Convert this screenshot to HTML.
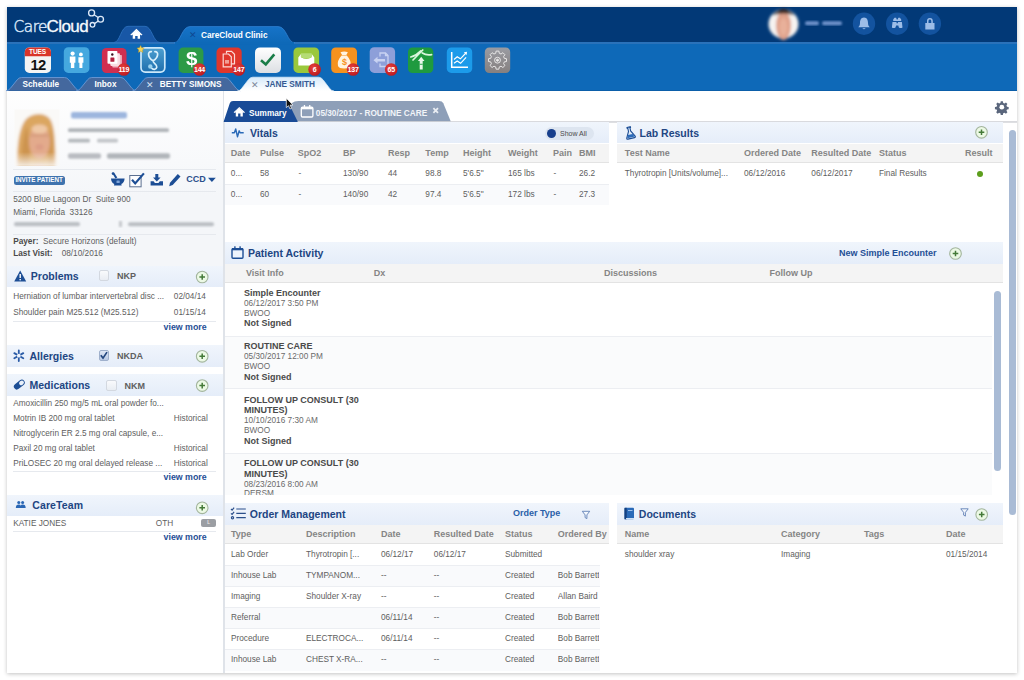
<!DOCTYPE html>
<html><head><meta charset="utf-8"><title>CareCloud</title>
<style>
*{box-sizing:border-box;margin:0;padding:0}
html,body{width:1024px;height:680px;overflow:hidden;background:#fff}
body{position:relative;font-family:"Liberation Sans",Arial,sans-serif;font-size:8.25px;color:#5e5e5e;line-height:1}
.a{position:absolute;white-space:pre}
.b{font-weight:700}
#app{position:absolute;left:7px;top:7px;width:1010px;height:666px;background:#fff;box-shadow:0 .5px 4px rgba(0,0,0,.24);overflow:hidden}
#top{position:absolute;left:7px;top:7px;width:1010px;height:35.5px;background:#023977}
#mid{position:absolute;left:7px;top:42px;width:1010px;height:48.7px;background:#0e69b8;border-top:2px solid #2a72ba;border-bottom:1px solid #0b5ea9}
.t{position:absolute;white-space:pre;line-height:12px;height:12px;margin-top:-6px}
.h{font-size:10.5px;font-weight:700;color:#214582}
.ch{font-size:9px;font-weight:700;color:#858585}
.hd{position:absolute;background:linear-gradient(#f0f5fc,#e5edf9);}
.cr{position:absolute;background:#f4f4f4;border-bottom:1px solid #e3e3e3}
.ln{position:absolute;height:1px;background:#e6e9ee}
.bd{color:#fff;font-size:7px;transform:translateX(-50%);letter-spacing:-.2px}
.pa{line-height:10.2px;color:#666}.pa b{font-size:9px;color:#4a4a4a}
.vm{font-size:8.8px;font-weight:700;color:#1f4f96}
</style></head><body>
<div id="app"></div>
<div id="top"></div>
<div id="mid"></div>
<!--HEADER-->
<svg class="a" style="left:0;top:0" width="1024" height="96" viewBox="0 0 1024 96">
<defs>
<linearGradient id="gw" x1="0" y1="0" x2="0" y2="1"><stop offset="0" stop-color="#fff"/><stop offset="1" stop-color="#dcdfe3"/></linearGradient>
<linearGradient id="gst" x1="0" y1="0" x2="0" y2="1"><stop offset="0" stop-color="#4d9fd0"/><stop offset="1" stop-color="#1f6fae"/></linearGradient>
<linearGradient id="ggr" x1="0" y1="0" x2="0" y2="1"><stop offset="0" stop-color="#9a9ca3"/><stop offset="1" stop-color="#86807f"/></linearGradient>
<linearGradient id="gjs" x1="0" y1="0" x2="0" y2="1"><stop offset="0" stop-color="#d6eafb"/><stop offset=".55" stop-color="#eef6fd"/><stop offset="1" stop-color="#ffffff"/></linearGradient>
<linearGradient id="gct" x1="0" y1="0" x2="0" y2="1"><stop offset="0" stop-color="#1673c8"/><stop offset="1" stop-color="#0e69b8"/></linearGradient><radialGradient id="gbd" cx=".4" cy=".35" r=".7"><stop offset="0" stop-color="#e8413a"/><stop offset="1" stop-color="#b81820"/></radialGradient>
<filter id="bl2"><feGaussianBlur stdDeviation="1.6"/></filter>
<filter id="bl1"><feGaussianBlur stdDeviation="1"/></filter>
</defs>
<!-- top tabs -->
<path d="M114 42.500 C120 42.500 121 26.300 128 26.300 L145 26.300 C152 26.300 153 42.500 160 42.500 Z" fill="#1857a6" stroke="#2f74c0" stroke-width=".8"/>
<path d="M174 42.800 C181 42.800 181.500 26.600 190 26.600 L278 26.600 C287 26.600 287 42.800 295 42.800 Z" fill="url(#gct)" stroke="#2f7fd0" stroke-width=".8"/>
<rect x="175" y="42" width="119" height="2.300" fill="#0e69b8"/>
<!-- home icon -->
<g transform="translate(136.400 34.600) scale(.82) translate(-136.500 -34)"><path d="M130.300 34.200 L136.500 28.400 L142.700 34.200 L141 34.200 L141 39.200 L138 39.200 L138 35.600 L135 35.600 L135 39.200 L132 39.200 L132 34.200 Z" fill="#fff"/>
<path d="M129.600 34.600 L136.500 28 L143.400 34.600" fill="none" stroke="#fff" stroke-width="1.500"/></g>
<!-- logo mark -->
<g fill="none" stroke="#dbe8f8" stroke-width="1.35">
<circle cx="91.6" cy="12.9" r="3"/><circle cx="100.6" cy="19.2" r="2.9"/><circle cx="92.5" cy="24.8" r="2.3"/>
<path d="M94.1 14.7 L98.2 17.5 M98.3 21 L94.5 23.6"/>
</g>
<!-- bottom tabs -->
<path d="M6.0 90.7 Q8.5 90.7 10.4 88.3 L17.1 79.9 Q19.0 77.5 21.5 77.5 L64.5 77.5 Q67.0 77.5 68.9 79.9 L75.6 88.3 Q77.5 90.7 80.0 90.7 Z" fill="#44689e"/><path d="M6.0 90.7 Q8.5 90.7 10.4 88.3 L17.1 79.9 Q19.0 77.5 21.5 77.5 L64.5 77.5 Q67.0 77.5 68.9 79.9 L75.6 88.3 Q77.5 90.7 80.0 90.7" fill="none" stroke="#6c99d4" stroke-width=".9"/>
<path d="M76.2 90.7 Q78.8 90.7 80.6 88.3 L87.4 79.9 Q89.2 77.5 91.8 77.5 L120.8 77.5 Q123.2 77.5 125.1 79.9 L131.9 88.3 Q133.8 90.7 136.2 90.7 Z" fill="#44689e"/><path d="M76.2 90.7 Q78.8 90.7 80.6 88.3 L87.4 79.9 Q89.2 77.5 91.8 77.5 L120.8 77.5 Q123.2 77.5 125.1 79.9 L131.9 88.3 Q133.8 90.7 136.2 90.7" fill="none" stroke="#6c99d4" stroke-width=".9"/>
<path d="M132.5 90.7 Q135.0 90.7 136.9 88.3 L143.6 79.9 Q145.5 77.5 148.0 77.5 L225.0 77.5 Q227.5 77.5 229.4 79.9 L236.1 88.3 Q238.0 90.7 240.5 90.7 Z" fill="#44689e"/><path d="M132.5 90.7 Q135.0 90.7 136.9 88.3 L143.6 79.9 Q145.5 77.5 148.0 77.5 L225.0 77.5 Q227.5 77.5 229.4 79.9 L236.1 88.3 Q238.0 90.7 240.5 90.7" fill="none" stroke="#6c99d4" stroke-width=".9"/>
<path d="M237.2 91 Q239.8 91 241.6 88.5 L248.4 79.7 Q250.2 77.2 252.8 77.2 L318.6 77.2 Q321.1 77.2 323.0 79.7 L329.7 88.5 Q331.6 91 334.1 91 Z" fill="url(#gjs)"/><path d="M237.2 91 Q239.8 91 241.6 88.5 L248.4 79.7 Q250.2 77.2 252.8 77.2 L318.6 77.2 Q321.1 77.2 323.0 79.7 L329.7 88.5 Q331.6 91 334.1 91" fill="none" stroke="#e4f1fc" stroke-width=".7"/>
<!-- ICONS -->
<!-- calendar -->
<rect x="24.8" y="47.5" width="26.2" height="25.4" rx="4.5" fill="#f4f4f4"/>
<path d="M24.8 56.2 L24.8 52 A4.5 4.5 0 0 1 29.300 47.5 L46.5 47.5 A4.5 4.5 0 0 1 51 52 L51 56.200 Z" fill="#d9352a"/>
<!-- people -->
<rect x="63.8" y="47.3" width="25.6" height="25.6" rx="4.5" fill="#45a8df"/>
<g fill="#fff"><circle cx="72.6" cy="53.6" r="2.1"/><path d="M69.800 56.600 h5.600 v6.200 h-1.100 v5.200 h-3.400 v-5.200 h-1.100z"/><circle cx="80.9" cy="54.400" r="1.900"/><path d="M78.400 57.200 h5 v5.600 h-1 v5.200 h-3 v-5.200 h-1z"/></g>
<!-- red docs -->
<rect x="101.900" y="48" width="24.600" height="25" rx="4.500" fill="#d02f50"/>
<g><rect x="112.300" y="55" width="9.600" height="12.600" rx=".8" fill="#f0b4c0"/><rect x="110.300" y="53.300" width="9.600" height="12.600" rx=".8" fill="#f8dde3"/><rect x="107.500" y="51" width="9.900" height="12.800" rx=".8" fill="#fff"/><circle cx="112.300" cy="54.500" r="1.200" fill="#3a1020"/><rect x="110.400" y="57.500" width="4" height="4.300" rx=".5" fill="#b21f3e"/></g>
<!-- stethoscope -->
<rect x="141" y="47.950" width="23.800" height="24.100" rx="4.200" fill="url(#gst)" stroke="#cbe8fa" stroke-width="1.700"/>
<path d="M151.300 51.600 C147.300 51.400 147.500 57.600 153.100 60.800 C158.700 57.600 158.900 51.400 154.900 51.600 M153.100 60.800 C153.100 63.800 157.200 64.200 156.800 67.200 C156.400 70 152.800 69.800 151.800 68.300" fill="none" stroke="#d9f0fc" stroke-width="1.700" stroke-linecap="round"/>
<circle cx="150.300" cy="66.500" r="2.200" fill="#9bd2ee"/>
<path d="M140.600 45.500 l1.100 2.300 2.500 .3 -1.800 1.800 .5 2.500 -2.300 -1.200 -2.200 1.200 .4 -2.500 -1.800 -1.800 2.500 -.3z" fill="#f6d55a" stroke="#b98f1d" stroke-width=".4"/>
<!-- dollar -->
<rect x="178.600" y="47.600" width="24.800" height="25.300" rx="4.500" fill="#2c9a47"/>
<!-- red copy -->
<rect x="216.500" y="47.600" width="25.200" height="25.300" rx="4.500" fill="#e0372c"/>
<g fill="none" stroke="#fbd9d5" stroke-width="1.200"><path d="M226.500 53.500 v-2.200 h5 l3 3 v9.500 h-3"/><path d="M223.200 54 h5.300 l2.800 2.800 v10 h-8.100z"/></g><rect x="225" y="60" width="4" height="3.600" fill="#f29d95"/>
<!-- check -->
<rect x="255" y="47.400" width="26" height="25.600" rx="5" fill="url(#gw)"/>
<path d="M261 60.200 L265.800 64.400 L274.300 54.300" fill="none" stroke="#1a7d48" stroke-width="2.600"/>
<!-- envelope -->
<rect x="293.500" y="47.500" width="25.600" height="25.400" rx="4.500" fill="#9ac83c"/>
<path d="M298.300 57.500 l2.600 -3.600 v3.400 q5.400 3.200 10.800 0 v-3.400 l2.600 3.600 v8 h-16z" fill="#fff"/>
<path d="M300.900 53.200 h10.800 v3.800 q-5.400 3.200 -10.800 0z" fill="#b5dc74"/>
<!-- money bag -->
<rect x="331.200" y="47.400" width="25.800" height="25.600" rx="4.500" fill="#f6921e"/>
<path d="M340.500 52.300 q3.700 -1.700 7.400 0 l-1.600 2.700 h-4.200z M341.600 55.500 h5.200 q5 5.500 3.600 10.500 q-1 2.500 -6.200 2.500 q-5.200 0 -6.200 -2.500 q-1.400 -5 3.600 -10.500z" fill="#fff3e0"/>
<!-- purple docs -->
<rect x="369.700" y="47.300" width="25.400" height="25.600" rx="4.500" fill="#8d9fd9"/>
<g fill="none" stroke="#c9d3f2" stroke-width="1.300"><path d="M380 56.500 v-3.500 h5.500 l2.500 2.500 v11 h-8 v-3"/><path d="M385.500 53 v2.500 h2.500"/></g><path d="M373.500 60.200 l4 -3.400 v2.100 h7.500 v2.600 h-7.500 v2.100z" fill="#c9d3f2"/>
<!-- green arrow -->
<rect x="408" y="47.400" width="25.300" height="25.600" rx="4.500" fill="#1f9a3f"/>
<g fill="#e8f7ea"><path d="M421.200 56.700 l3.300 4.300 h-1.800 v8.500 h-3 v-8.500 h-1.800z"/></g><g fill="none" stroke="#d9f5dd" stroke-width="1.700" stroke-linecap="round"><path d="M410.800 57 q5.500 -1.500 10 -6.200 M413 60 l9.800 -10 M422.300 53 q4 2.600 9.300 1.600"/></g>
<rect x="419.700" y="63.800" width="3" height=".9" fill="#1f9a3f"/>
<!-- chart -->
<rect x="446.800" y="47.400" width="25.400" height="25.500" rx="4.500" fill="#1c9bea"/>
<g fill="none" stroke="#fff" stroke-width="1.500"><path d="M451.700 52 v15.300 h16.300"/><path d="M454 59.500 l3.200 -2.700 3.200 2 5.500 -5.800" stroke-width="1.200"/><path d="M454 63.300 l3.200 -2.300 3.400 2.300 5.500 -6" stroke-width="1.200"/></g>
<path d="M463.800 52.300 l3.300 -.6 -.5 3.300z" fill="#fff"/>
<!-- gear -->
<rect x="484.800" y="47.400" width="25.400" height="25.600" rx="4.500" fill="url(#ggr)"/>
<g fill="none" stroke="#ecebeb" stroke-width="1.100" transform="translate(497.500 60.200) scale(.86) translate(-497.500 -60.200)"><circle cx="497.500" cy="60.200" r="3.400"/><circle cx="497.500" cy="60.200" r="1.200" fill="#ecebeb"/>
<path id="gearp" d="M495.900 51 h3.200 l.5 2.600 2 .8 2.200 -1.500 2.300 2.300 -1.500 2.200 .8 2 2.600 .5 v3.200 l-2.600 .5 -.8 2 1.500 2.200 -2.300 2.300 -2.200 -1.500 -2 .8 -.5 2.600 h-3.200 l-.5 -2.600 -2 -.8 -2.200 1.500 -2.300 -2.300 1.500 -2.200 -.8 -2 -2.600 -.5 v-3.200 l2.600 -.5 .8 -2 -1.500 -2.200 2.300 -2.300 2.200 1.500 2 -.8z" transform="translate(0,-1.400)"/></g>
<!-- badges -->
<g fill="url(#gbd)"><circle cx="123.800" cy="69.500" r="6.300"/><circle cx="199.500" cy="69.500" r="6.300"/><circle cx="238.800" cy="69.500" r="6.300"/><circle cx="314.600" cy="69.500" r="6.300"/><circle cx="353.100" cy="69.500" r="6.300"/><circle cx="391.200" cy="69.500" r="6.300"/></g>
<!-- top right -->
<g filter="url(#bl2)"><ellipse cx="783.500" cy="24" rx="15" ry="14.500" fill="#f6f3f1"/><ellipse cx="783.500" cy="25.500" rx="7.500" ry="14.500" fill="#dfa08a"/><ellipse cx="783.500" cy="27" rx="4" ry="9" fill="#e8b09a"/><path d="M772.500 15.500 q11 -13 22 0 q-11 -4 -22 0z" fill="#3a2620"/></g>
<g filter="url(#bl1)" fill="#6f93cb"><rect x="805" y="21.300" width="14" height="4" rx="2"/><rect x="822" y="21.300" width="20" height="4" rx="2"/></g>
<g fill="#13539f"><circle cx="864" cy="23.700" r="11.200"/><circle cx="897.200" cy="23.700" r="11.200"/><circle cx="929.900" cy="23.700" r="11.200"/></g>
<g fill="#9dbde8">
<path d="M864 17.500 c3.200 0 4 3 4 5.500 c0 2.500 1 3.300 1.700 4.200 h-11.400 c.7 -.9 1.700 -1.700 1.700 -4.200 c0 -2.500 .8 -5.500 4 -5.500z M862.300 28.200 h3.400 q-1.700 2 -3.400 0z"/>
<path d="M893.200 19.500 l1.300 -1.800 h1.600 l.6 1.800 h1 l.6 -1.800 h1.600 l1.300 1.800 v1.500 h-8z M892.500 22 h4 v1.200 h1.400 v-1.200 h4 l.6 5.500 q-1.800 1.200 -3.600 0 l-.6 -2 h-2.200 l-.6 2 q-1.800 1.200 -3.600 0z"/>
<path d="M925.300 23 h9.200 v6.500 h-9.200z M927 23 v-2 a2.900 2.900 0 0 1 5.800 0 v2 h-1.500 v-2 a1.400 1.400 0 0 0 -2.800 0 v2z"/>
</g>
</svg>
<div class="a" style="left:13.600px;top:17.200px;font-size:17px;line-height:20px;color:#e4eefb"><span style="font-family:'DejaVu Sans Light','DejaVu Sans',sans-serif;font-weight:200;font-size:15.300px;letter-spacing:-.5px;-webkit-text-stroke:.5px #d3e2f6;color:#d3e2f6">Care</span><span style="letter-spacing:-.55px;color:#f6f9fe;-webkit-text-stroke:.3px #f6f9fe;margin-left:-.5px">Cloud</span></div>
<div class="t b" style="left:201px;top:35.600px;color:#fff;font-size:8.250px">CareCloud Clinic</div>
<div class="t" style="left:188.800px;top:34.800px;color:#0f4890;font-size:8.500px">✕</div>
<div class="t b" style="left:22.500px;top:84.900px;color:#fff;font-size:8.250px">Schedule</div>
<div class="t b" style="left:94.500px;top:84.900px;color:#fff;font-size:8.250px">Inbox</div>
<div class="t" style="left:145.500px;top:85px;color:#d5e2f3;font-size:9px">✕</div>
<div class="t b" style="left:159.800px;top:84.900px;color:#fff;font-size:8.250px">BETTY SIMONS</div>
<div class="t" style="left:251.200px;top:85px;color:#7c8799;font-size:9px">✕</div>
<div class="t b" style="left:265px;top:84.900px;color:#365a93;font-size:8.250px">JANE SMITH</div>
<div class="t b" style="left:29px;top:52.300px;color:#fff;font-size:6.600px;letter-spacing:-.15px">TUES</div>
<div class="t b" style="left:30.600px;top:64.800px;color:#111;font-size:14.800px;letter-spacing:-.9px;line-height:14px;height:14px;margin-top:-7px">12</div>
<div class="t b" style="left:185.600px;top:59.300px;color:#fff;font-size:19px;transform:scaleX(1.08);transform-origin:0 0;line-height:20px;height:20px;margin-top:-10px">$</div>
<div class="t b" style="left:342px;top:62.300px;color:#f6921e;font-size:9px">$</div>
<div class="t b bd" style="left:123.800px;top:69.700px">119</div>
<div class="t b bd" style="left:199.500px;top:69.700px">144</div>
<div class="t b bd" style="left:238.800px;top:69.700px">147</div>
<div class="t b bd" style="left:314.600px;top:69.700px">6</div>
<div class="t b bd" style="left:353.100px;top:69.700px">137</div>
<div class="t b bd" style="left:391.200px;top:69.700px">65</div>
<!--/HEADER-->
<!--LEFT-->
<div class="a" style="left:7px;top:91px;width:216px;height:174.500px;background:linear-gradient(#fefefe 0,#f8f9fb 40%,#f4f6f9 60%,#f4f6f9 100%)"></div>
<div class="a" style="left:222.500px;top:91px;width:1px;height:582px;background:#dfe3e9"></div>
<svg class="a" style="left:7px;top:95px" width="216" height="100" viewBox="7 95 216 100">
<defs><filter id="pb"><feGaussianBlur stdDeviation="1.700"/></filter><filter id="pb2"><feGaussianBlur stdDeviation="1.300"/></filter>
<linearGradient id="pfade" x1="0" y1="0" x2="0" y2="1"><stop offset="0" stop-color="#faf9f7" stop-opacity="0"/><stop offset="1" stop-color="#faf9f7" stop-opacity=".85"/></linearGradient><clipPath id="pc"><rect x="14.500" y="109.500" width="45" height="56"/></clipPath></defs>
<g clip-path="url(#pc)"><g filter="url(#pb)">
<rect x="10" y="105" width="54" height="66" fill="#faf9f7"/>
<path d="M17 170 C17 150 18 132 24 122 C29 113 44 111 50 119 C56 128 55 150 56 170z" fill="#dba661"/>
<path d="M21 170 C21 150 23 135 27 126 L30 150 L29 170z" fill="#cd9450"/>
<path d="M52 170 C53 155 53 140 51 128 L48 150 L49 170z" fill="#cf9752"/>
<ellipse cx="39.500" cy="142" rx="10.500" ry="16.500" fill="#e3aa8c"/>
<ellipse cx="39.500" cy="129" rx="8" ry="4.500" fill="#efc8a5"/>
<ellipse cx="39.500" cy="147" rx="4" ry="3" fill="#dd9d86"/>
<rect x="30" y="134.500" width="19" height="2" fill="#c98f6e" opacity=".6"/>
<path d="M30 170 q9.500 -12 19 0z" fill="#dca07f"/>
</g><rect x="14" y="152" width="46" height="14" fill="url(#pfade)"/></g>

<g filter="url(#pb2)">
<rect x="71" y="112" width="56" height="6.500" rx="2" fill="#9db6de"/>
<rect x="68" y="128.300" width="101" height="3.800" rx="1.500" fill="#aeb2b7"/>
<rect x="68" y="138.800" width="22" height="3.800" rx="1.500" fill="#b4b8bc"/><rect x="97" y="138.800" width="21" height="3.800" rx="1.500" fill="#c1c4c8"/>
<rect x="68" y="153.300" width="33" height="5.400" rx="2" fill="#b9bcc1"/><rect x="107" y="153.300" width="63" height="5.400" rx="2" fill="#b1b5ba"/>
</g>
</svg>
<div class="ln" style="left:13px;top:168.500px;width:203px"></div>
<div class="a b" style="left:13.500px;top:175.800px;width:51.200px;height:8.800px;border-radius:2.500px;background:#3f73ae;color:#fff;font-size:6.300px;line-height:8.800px;text-align:center;letter-spacing:-.05px">INVITE PATIENT</div>
<svg class="a" style="left:108px;top:170px" width="112" height="20" viewBox="108 170 112 20">
<g fill="#1d4e95">
<path d="M111 178.500 h13.600 q-.3 4.200 -3.300 5.600 l.4 1.500 h-7.800 l.4 -1.500 q-3 -1.400 -3.300 -5.600z"/>
<path d="M112.300 173.300 l1.700 -.7 3.300 5 -1.900 .9z"/>
<circle cx="113" cy="173.600" r="1.300"/>
<path d="M150.600 181.300 h3 l1.300 1.600 h3.600 l1.300 -1.600 h3.200 v4.200 h-12.400z"/>
<path d="M155.300 174 h3 v3.500 h2.300 l-3.800 4 -3.800 -4 h2.300z"/>
<path d="M169.200 186.200 l.8 -3.500 7.800 -8.700 2.700 2.400 -7.800 8.700z"/>
<path d="M208 177.700 h7.800 l-3.900 4.300z"/>
</g>
<rect x="129.800" y="175.500" width="11.300" height="11.300" fill="#fdfdfe" stroke="#5b6f90" stroke-width="1"/>
<path d="M132 179.800 l3.200 3.600 l8.700 -10" fill="none" stroke="#1d4e95" stroke-width="2.200"/>
<rect x="116.500" y="180.500" width="3.200" height="2.600" rx=".5" fill="#7fa4d8"/>
</svg>
<div class="t b" style="left:186.200px;top:179px;color:#2a4f8b;font-size:9px">CCD</div>
<div class="ln" style="left:13px;top:191px;width:203px"></div>
<div class="t" style="left:13.200px;top:200.400px">5200 Blue Lagoon Dr&nbsp; Suite 900</div>
<div class="t" style="left:13.200px;top:212.700px">Miami, Florida&nbsp; 33126</div>
<svg class="a" style="left:7px;top:216px" width="216" height="16" viewBox="7 216 216 16"><g filter="url(#pb2)"><rect x="14" y="222" width="66" height="4.300" rx="2" fill="#bbbfc4"/><rect x="128" y="222.200" width="86" height="4" rx="2" fill="#b9bdc2"/><rect x="119" y="221" width="3" height="6" fill="#c5c8cc"/></g></svg>
<div class="ln" style="left:13px;top:233.600px;width:203px"></div>
<div class="t" style="left:13.200px;top:241.800px"><b style="color:#4a4a4a">Payer:</b>&nbsp; Secure Horizons (default)</div>
<div class="t" style="left:13.200px;top:253.700px"><b style="color:#4a4a4a">Last Visit:</b>&nbsp; &nbsp; 08/10/2016</div>

<div class="hd" style="left:7px;top:265.500px;width:216px;height:21.500px"></div>
<div class="t h" style="left:30.800px;top:276.000px">Problems</div>
<div class="a" style="left:98.500px;top:270.300px;width:10.500px;height:10.500px;border:1px solid #d3d8e0;border-radius:2px;background:linear-gradient(#f9fafc,#e9edf3)"></div>
<div class="t b" style="left:117px;top:276.400px;color:#5f5f5f;font-size:9px">NKP</div>
<div class="t" style="left:13.200px;top:297.300px">Herniation of lumbar intervertebral disc ...</div><div class="t" style="left:173.800px;top:297.300px">02/04/14</div>
<div class="t" style="left:13.200px;top:312.500px">Shoulder pain M25.512 (M25.512)</div><div class="t" style="left:173.800px;top:312.500px">01/15/14</div>
<div class="ln" style="left:13px;top:321.300px;width:203px"></div>
<div class="t vm" style="left:163.600px;top:327.200px">view more</div>

<div class="hd" style="left:7px;top:345px;width:216px;height:21.500px"></div>
<div class="t h" style="left:29.500px;top:355.500px">Allergies</div>
<div class="a" style="left:98.500px;top:350.300px;width:10.500px;height:10.500px;border:1px solid #9fb0cc;border-radius:2px;background:linear-gradient(#dfe7f5,#b9c9e4)"></div>
<div class="t b" style="left:117px;top:356.400px;color:#5f5f5f;font-size:9px">NKDA</div>

<div class="hd" style="left:7px;top:374px;width:216px;height:21.500px"></div>
<div class="t h" style="left:29.500px;top:384.800px">Medications</div>
<div class="a" style="left:106px;top:380.300px;width:10.500px;height:10.500px;border:1px solid #d3d8e0;border-radius:2px;background:linear-gradient(#f9fafc,#e9edf3)"></div>
<div class="t b" style="left:124.500px;top:385.700px;color:#5f5f5f;font-size:9px">NKM</div>
<div class="t" style="left:13.200px;top:403.500px">Amoxicillin 250 mg/5 mL oral powder fo...</div>
<div class="t" style="left:13.200px;top:418.600px">Motrin IB 200 mg oral tablet</div><div class="t" style="left:173.800px;top:418.600px">Historical</div>
<div class="t" style="left:13.200px;top:433.600px">Nitroglycerin ER 2.5 mg oral capsule, e...</div>
<div class="t" style="left:13.200px;top:448.600px">Paxil 20 mg oral tablet</div><div class="t" style="left:173.800px;top:448.600px">Historical</div>
<div class="t" style="left:13.200px;top:463.600px">PriLOSEC 20 mg oral delayed release ...</div><div class="t" style="left:173.800px;top:463.600px">Historical</div>
<div class="ln" style="left:13px;top:471px;width:203px"></div>
<div class="t vm" style="left:163.600px;top:476.700px">view more</div>

<div class="hd" style="left:7px;top:494.500px;width:216px;height:21.500px"></div>
<div class="t h" style="left:32.300px;top:504.700px;letter-spacing:.1px">CareTeam</div>
<div class="t" style="left:13.200px;top:523.600px">KATIE JONES</div><div class="t" style="left:155.800px;top:523.600px">OTH</div>
<div class="a b" style="left:201.300px;top:519.300px;width:14.500px;height:8px;border-radius:2px;background:#9b9ea3;color:#e8e8e8;font-size:4.500px;line-height:8px;text-align:center">L</div>
<div class="ln" style="left:13px;top:531.300px;width:203px"></div>
<div class="t vm" style="left:163.600px;top:536.700px">view more</div>

<svg class="a" style="left:7px;top:262px" width="216" height="260" viewBox="7 262 216 260">
<g fill="none" stroke="#a3b59d" stroke-width="1.100"><circle cx="202.200" cy="277" r="5.800" fill="#ecf9e5"/><circle cx="202.200" cy="356.300" r="5.800" fill="#ecf9e5"/><circle cx="202.200" cy="385.600" r="5.800" fill="#ecf9e5"/><circle cx="202.200" cy="507.800" r="5.800" fill="#ecf9e5"/></g>
<g stroke="#447a38" stroke-width="1.500"><path d="M199.4 277 h5.600 M202.200 274.2 v5.600 M199.4 356.300 h5.600 M202.200 353.5 v5.600 M199.4 385.600 h5.600 M202.200 382.8 v5.600 M199.4 507.800 h5.600 M202.200 505.0 v5.600"/></g>
<!-- warning -->
<path d="M20.200 270.500 l6 11 h-12z" fill="#1d4e95"/><rect x="19.500" y="274" width="1.400" height="4" fill="#fff"/><rect x="19.500" y="279" width="1.400" height="1.300" fill="#fff"/>
<!-- asterisk -->
<g stroke="#2a5ba6" stroke-width="1.800" stroke-linecap="round"><path d="M18.800 350.500 v10.500 M14.300 353.100 l9 5.200 M14.300 358.300 l9 -5.200"/></g><circle cx="18.800" cy="355.700" r="1.900" fill="#eef3fb"/>
<!-- pill -->
<g transform="rotate(-38 19.300 384.600)"><rect x="13.200" y="381.600" width="12.200" height="6" rx="3" fill="#1d4e95"/><rect x="19.600" y="382.500" width="5" height="4.200" rx="2.100" fill="#e9f0fa"/></g>
<!-- team -->
<g fill="#2a67b5" transform="translate(20.500 505) scale(.85) translate(-21.500 -505)"><circle cx="19.500" cy="502" r="1.800"/><circle cx="24" cy="502" r="1.800"/><path d="M16 508.500 q0 -4 3.500 -4 q2.200 0 2.300 1.500 q.1 -1.500 2.300 -1.500 q3.500 0 3.500 4z"/></g>
<!-- nkda check -->
<path d="M100.800 355.300 l2.200 2.800 l4 -6" fill="none" stroke="#24477f" stroke-width="1.700"/>
</svg>
<!--/LEFT-->
<!--MAIN-->
<svg class="a" style="left:220px;top:96px" width="800" height="30" viewBox="220 96 800 30">
<path d="M288 121.500 L288 110 Q290 101 298.500 101 L439 101 Q442.300 101 443.300 103.300 L450.800 121.500 Z" fill="#8e9fb8"/>
<path d="M223.600 121.800 L229.800 103.300 Q230.600 101 233 101 L285.500 101 Q287.800 101 288.700 103.200 L297.800 121.800 Z" fill="#194b97"/>
<rect x="224" y="121.300" width="793" height="1.300" fill="#c9cbd0"/>
<rect x="224" y="120.800" width="73.500" height="1.400" fill="#194b97"/>
<g transform="translate(239.300 112.200) scale(.88) translate(-239.300 -112)"><path d="M233.800 112.300 L239.300 107.100 L244.800 112.300 L243.300 112.300 L243.300 116.900 L240.600 116.900 L240.600 113.600 L238 113.600 L238 116.900 L235.300 116.900 L235.300 112.300 Z" fill="#fff"/>
<path d="M233.300 112.600 L239.300 106.900 L245.300 112.600" fill="none" stroke="#fff" stroke-width="1.200"/></g>
<rect x="301.300" y="107.200" width="11.600" height="9.800" rx="1.300" fill="none" stroke="#fff" stroke-width="1.300"/><rect x="301.300" y="107" width="11.600" height="2.300" fill="#fff"/><rect x="303.800" y="105" width="1.300" height="3" fill="#fff"/><rect x="309.100" y="105" width="1.300" height="3" fill="#fff"/>
<path d="M433.400 108.200 l4.600 4.600 M438 108.200 l-4.600 4.600" stroke="#e9edf3" stroke-width="1.800"/>
<!-- gear -->
<g transform="translate(1001.800 107.200) scale(.88)"><path d="M-1.200 -6.800 h2.400 l.4 1.900 1.500 .6 1.600 -1.100 1.700 1.700 -1.100 1.600 .6 1.500 1.900 .4 v2.400 l-1.900 .4 -.6 1.500 1.100 1.600 -1.700 1.700 -1.600 -1.100 -1.500 .6 -.4 1.900 h-2.400 l-.4 -1.900 -1.500 -.6 -1.600 1.100 -1.700 -1.700 1.100 -1.600 -.6 -1.500 -1.900 -.4 v-2.400 l1.900 -.4 .6 -1.500 -1.100 -1.600 1.700 -1.700 1.600 1.100 1.500 -.6z" fill="#5a667c"/><circle r="2.700" fill="#fff"/></g>
<!-- cursor -->
<path d="M286.300 98.200 L286.300 107.600 L288.500 105.700 L290 109 L291.600 108.300 L290.100 105.100 L293 105 Z" fill="#111" stroke="#fff" stroke-width=".7"/>
</svg>
<div class="t b" style="left:249px;top:113.600px;color:#fff">Summary</div>
<div class="t b" style="left:315.800px;top:113.600px;color:#f1f4f8">05/30/2017 - ROUTINE CARE</div>
<div class="a" style="left:223.500px;top:122px;width:1px;height:551px;background:#dfe3e9"></div>

<!-- Vitals -->
<div class="hd" style="left:224.500px;top:122.200px;width:384.500px;height:21.300px"></div>
<div class="t h" style="left:250px;top:133.200px">Vitals</div>
<svg class="a" style="left:230px;top:126px" width="16" height="14" viewBox="230 126 16 14"><path d="M231.800 132.800 h2.600 l1.300 -3.800 1.800 7.800 1.700 -6 .9 2 h3.600" fill="none" stroke="#2a6ab8" stroke-width="1.400" stroke-linejoin="round"/></svg>
<div class="a" style="left:545px;top:127px;width:49px;height:13.400px;border-radius:7px;background:#dde5f0"></div>
<div class="a" style="left:546.800px;top:129.200px;width:9px;height:9px;border-radius:5px;background:#183f8c"></div>
<div class="t" style="left:560px;top:133.800px;font-size:7px;color:#4b4b4b">Show All</div>
<div class="cr" style="left:224.500px;top:143.500px;width:384.500px;height:19px"></div>
<div class="t ch" style="left:230.800px;top:153.400px">Date</div><div class="t ch" style="left:260px;top:153.400px">Pulse</div><div class="t ch" style="left:297.800px;top:153.400px">SpO2</div><div class="t ch" style="left:343px;top:153.400px">BP</div><div class="t ch" style="left:388px;top:153.400px">Resp</div><div class="t ch" style="left:425.300px;top:153.400px">Temp</div><div class="t ch" style="left:463px;top:153.400px">Height</div><div class="t ch" style="left:508px;top:153.400px">Weight</div><div class="t ch" style="left:553px;top:153.400px">Pain</div><div class="t ch" style="left:579px;top:153.400px">BMI</div>
<div class="ln" style="left:224.500px;top:183.800px;width:384.500px;background:#eceef2"></div>
<div class="a" style="left:224.500px;top:184.800px;width:384.500px;height:20px;background:#f9fafc"></div>
<div class="t" style="left:230.800px;top:174px">0...</div><div class="t" style="left:260px;top:174px">58</div><div class="t" style="left:298.500px;top:174px">-</div><div class="t" style="left:343px;top:174px">130/90</div><div class="t" style="left:388px;top:174px">44</div><div class="t" style="left:425.300px;top:174px">98.8</div><div class="t" style="left:463px;top:174px">5'6.5"</div><div class="t" style="left:508px;top:174px">165 lbs</div><div class="t" style="left:553.500px;top:174px">-</div><div class="t" style="left:579px;top:174px">26.2</div>
<div class="t" style="left:230.800px;top:194.800px">0...</div><div class="t" style="left:260px;top:194.800px">60</div><div class="t" style="left:298.500px;top:194.800px">-</div><div class="t" style="left:343px;top:194.800px">140/90</div><div class="t" style="left:388px;top:194.800px">42</div><div class="t" style="left:425.300px;top:194.800px">97.4</div><div class="t" style="left:463px;top:194.800px">5'6.5"</div><div class="t" style="left:508px;top:194.800px">172 lbs</div><div class="t" style="left:553.500px;top:194.800px">-</div><div class="t" style="left:579px;top:194.800px">27.3</div>

<!-- Lab Results -->
<div class="hd" style="left:617px;top:122.200px;width:386px;height:21.300px"></div>
<svg class="a" style="left:622px;top:125px" width="16" height="16" viewBox="622 125 16 16"><g transform="rotate(-13 630 133)"><path d="M628.300 127 h3.400 v.9 h-.6 v3.200 l3.200 6.100 q.5 1.300 -.9 1.300 h-6.800 q-1.400 0 -.9 -1.300 l3.200 -6.100 v-3.200 h-.6z" fill="#dfeaf8" stroke="#1d4e95" stroke-width="1.100"/><path d="M627.600 134.500 h4.800 l1.500 3 h-7.800z" fill="#2a6ab8"/></g></svg>
<div class="t h" style="left:639.500px;top:133.200px">Lab Results</div>
<div class="cr" style="left:617px;top:143.500px;width:386px;height:19px"></div>
<div class="t ch" style="left:624.800px;top:153.400px">Test Name</div><div class="t ch" style="left:744px;top:153.400px">Ordered Date</div><div class="t ch" style="left:811.300px;top:153.400px">Resulted Date</div><div class="t ch" style="left:879px;top:153.400px">Status</div><div class="t ch" style="left:965px;top:153.400px">Result</div>
<div class="t" style="left:624.800px;top:174px">Thyrotropin [Units/volume]...</div><div class="t" style="left:744px;top:174px">06/12/2016</div><div class="t" style="left:811.300px;top:174px">06/12/2017</div><div class="t" style="left:879px;top:174px">Final Results</div>
<div class="a" style="left:977px;top:171px;width:6.400px;height:6.400px;border-radius:4px;background:#5c9e1c"></div>

<!-- Patient Activity -->
<div class="hd" style="left:224.500px;top:242.200px;width:778.500px;height:22px"></div>
<svg class="a" style="left:230px;top:245.200px" width="16" height="16" viewBox="230 246 16 16"><rect x="232" y="249.600" width="11" height="9.600" rx="1" fill="#eef4fc" stroke="#1d4e95" stroke-width="1.400"/><rect x="232" y="249" width="11" height="2.300" fill="#1d4e95"/><rect x="234.200" y="247.300" width="1.400" height="3" fill="#1d4e95"/><rect x="239.400" y="247.300" width="1.400" height="3" fill="#1d4e95"/></svg>
<div class="t h" style="left:248px;top:253px">Patient Activity</div>
<div class="t b" style="left:839px;top:253px;font-size:9px;color:#1f4f96">New Simple Encounter</div>
<div class="cr" style="left:224.500px;top:264.200px;width:778.500px;height:18.500px"></div>
<div class="t ch" style="left:246px;top:273px">Visit Info</div><div class="t ch" style="left:373.800px;top:273px">Dx</div><div class="t ch" style="left:604px;top:273px">Discussions</div><div class="t ch" style="left:769.500px;top:273px">Follow Up</div>
<div class="a" style="left:224.500px;top:336.300px;width:767.500px;height:53px;background:#fafbfc;border-top:1px solid #eceef2;border-bottom:1px solid #eceef2"></div>
<div class="a" style="left:224.500px;top:453px;width:767.500px;height:43px;background:#fafbfc;border-top:1px solid #eceef2"></div>
<div class="t b" style="left:244px;top:293px;font-size:9px;color:#4a4a4a">Simple Encounter</div>
<div class="t" style="left:244px;top:304px;color:#6a6a6a">06/12/2017 3:50 PM</div>
<div class="t" style="left:244px;top:314px;color:#6a6a6a">BWOO</div>
<div class="t b" style="left:244px;top:323px;font-size:9px;color:#4a4a4a">Not Signed</div>
<div class="t b" style="left:244px;top:346px;font-size:9px;color:#4a4a4a">ROUTINE CARE</div>
<div class="t" style="left:244px;top:357px;color:#6a6a6a">05/30/2017 12:00 PM</div>
<div class="t" style="left:244px;top:367px;color:#6a6a6a">BWOO</div>
<div class="t b" style="left:244px;top:377px;font-size:9px;color:#4a4a4a">Not Signed</div>
<div class="t b" style="left:244px;top:400px;font-size:9px;color:#4a4a4a">FOLLOW UP CONSULT (30</div>
<div class="t b" style="left:244px;top:410px;font-size:9px;color:#4a4a4a">MINUTES)</div>
<div class="t" style="left:244px;top:421px;color:#6a6a6a">10/10/2016 7:30 AM</div>
<div class="t" style="left:244px;top:431px;color:#6a6a6a">BWOO</div>
<div class="t b" style="left:244px;top:441px;font-size:9px;color:#4a4a4a">Not Signed</div>
<div class="t b" style="left:244px;top:463px;font-size:9px;color:#4a4a4a">FOLLOW UP CONSULT (30</div>
<div class="t b" style="left:244px;top:474px;font-size:9px;color:#4a4a4a">MINUTES)</div>
<div class="t" style="left:244px;top:485px;color:#6a6a6a">08/23/2016 8:00 AM</div>
<div class="t" style="left:244px;top:494px;color:#6a6a6a">DERSM</div>
<div class="a" style="left:224.500px;top:495px;width:780px;height:8.600px;background:#fff"></div>
<div class="a" style="left:994px;top:290.500px;width:7px;height:180px;border-radius:3.500px;background:#a9bbd5"></div>
<div class="a" style="left:1008.500px;top:130px;width:7px;height:385px;border-radius:3.500px;background:#a9bbd5"></div>

<!-- Order Management -->
<div class="hd" style="left:224.500px;top:503px;width:384.500px;height:22px"></div>
<svg class="a" style="left:229px;top:505.800px" width="18" height="16" viewBox="229 507 18 16"><g stroke="#2a4f8b" stroke-width="1.200" fill="none"><path d="M236.300 510 h9.500 M236.300 514.300 h9.500 M236.300 518.600 h9.500"/><path d="M231 510 l1.100 1.100 2 -2.500 M231 514.300 l1.100 1.100 2 -2.500"/><circle cx="232.500" cy="518.700" r="1.100"/></g></svg>
<div class="t h" style="left:249.800px;top:514px">Order Management</div>
<div class="t b" style="left:513px;top:513px;font-size:9px;color:#2a5fa8">Order Type</div>
<div class="cr" style="left:224.500px;top:525px;width:384.500px;height:19px"></div>
<div class="t ch" style="left:231px;top:534px">Type</div><div class="t ch" style="left:306px;top:534px">Description</div><div class="t ch" style="left:381px;top:534px">Date</div><div class="t ch" style="left:433.800px;top:534px">Resulted Date</div><div class="t ch" style="left:505px;top:534px">Status</div><div class="t ch" style="left:557.800px;top:534px">Ordered By</div>
<div class="ln" style="left:224.500px;top:564.7px;width:375px;background:#eceef2"></div>
<div class="t" style="left:231px;top:555px">Lab Order</div>
<div class="t" style="left:306px;top:555px">Thyrotropin [...</div>
<div class="t" style="left:381px;top:555px">06/12/17</div>
<div class="t" style="left:433.8px;top:555px">06/12/17</div>
<div class="t" style="left:505px;top:555px">Submitted</div>
<div class="a" style="left:224.500px;top:565.5px;width:375px;height:21px;background:#f9fafc"></div>
<div class="ln" style="left:224.500px;top:585.7px;width:375px;background:#eceef2"></div>
<div class="t" style="left:231px;top:576px">Inhouse Lab</div>
<div class="t" style="left:306px;top:576px">TYMPANOM...</div>
<div class="t" style="left:381px;top:576px">--</div>
<div class="t" style="left:433.8px;top:576px">--</div>
<div class="t" style="left:505px;top:576px">Created</div>
<div class="t" style="left:557.8px;top:576px;width:41.500px;overflow:hidden">Bob Barrett</div>
<div class="ln" style="left:224.500px;top:606.7px;width:375px;background:#eceef2"></div>
<div class="t" style="left:231px;top:597px">Imaging</div>
<div class="t" style="left:306px;top:597px">Shoulder X-ray</div>
<div class="t" style="left:381px;top:597px">--</div>
<div class="t" style="left:433.8px;top:597px">--</div>
<div class="t" style="left:505px;top:597px">Created</div>
<div class="t" style="left:557.8px;top:597px;width:41.500px;overflow:hidden">Allan Baird</div>
<div class="a" style="left:224.500px;top:607.5px;width:375px;height:21px;background:#f9fafc"></div>
<div class="ln" style="left:224.500px;top:627.7px;width:375px;background:#eceef2"></div>
<div class="t" style="left:231px;top:618px">Referral</div>
<div class="t" style="left:381px;top:618px">06/11/14</div>
<div class="t" style="left:433.8px;top:618px">--</div>
<div class="t" style="left:505px;top:618px">Created</div>
<div class="t" style="left:557.8px;top:618px;width:41.500px;overflow:hidden">Bob Barrett</div>
<div class="ln" style="left:224.500px;top:648.7px;width:375px;background:#eceef2"></div>
<div class="t" style="left:231px;top:639px">Procedure</div>
<div class="t" style="left:306px;top:639px">ELECTROCA...</div>
<div class="t" style="left:381px;top:639px">06/11/14</div>
<div class="t" style="left:433.8px;top:639px">--</div>
<div class="t" style="left:505px;top:639px">Created</div>
<div class="t" style="left:557.8px;top:639px;width:41.500px;overflow:hidden">Bob Barrett</div>
<div class="a" style="left:224.500px;top:649.5px;width:375px;height:21px;background:#f9fafc"></div>

<div class="t" style="left:231px;top:660px">Inhouse Lab</div>
<div class="t" style="left:306px;top:660px">CHEST X-RA...</div>
<div class="t" style="left:381px;top:660px">--</div>
<div class="t" style="left:433.8px;top:660px">--</div>
<div class="t" style="left:505px;top:660px">Created</div>
<div class="t" style="left:557.8px;top:660px;width:41.500px;overflow:hidden">Bob Barrett</div>

<!-- Documents -->
<div class="hd" style="left:617px;top:503px;width:386px;height:22px"></div>
<svg class="a" style="left:622px;top:506px" width="16" height="16" viewBox="622 506 16 16"><rect x="624.500" y="507.800" width="9.500" height="11.500" rx="1" fill="#2a6ab8"/><rect x="624.500" y="507.800" width="2.200" height="11.500" fill="#15407f"/><rect x="628" y="510" width="4.500" height="1" fill="#9cc0ea"/><rect x="626" y="518" width="8" height="1.300" fill="#cfe0f4"/></svg>
<div class="t h" style="left:638.800px;top:514px">Documents</div>
<div class="cr" style="left:617px;top:525px;width:386px;height:19px"></div>
<div class="t ch" style="left:624.800px;top:534px">Name</div><div class="t ch" style="left:781px;top:534px">Category</div><div class="t ch" style="left:864px;top:534px">Tags</div><div class="t ch" style="left:946px;top:534px">Date</div>
<div class="t" style="left:624.800px;top:555px">shoulder xray</div><div class="t" style="left:781px;top:555px">Imaging</div><div class="t" style="left:946px;top:555px">01/15/2014</div>

<svg class="a" style="left:224px;top:122px" width="790" height="410" viewBox="224 122 790 410">
<g fill="#ecf9e5" stroke="#a3b59d" stroke-width="1.100"><circle cx="981.500" cy="132.300" r="5.800"/><circle cx="955.500" cy="253.500" r="5.800"/><circle cx="981.700" cy="514.500" r="5.800"/></g>
<g stroke="#447a38" stroke-width="1.500"><path d="M978.7 132.300 h5.600 M981.500 129.5 v5.600 M952.7 253.500 h5.600 M955.500 250.7 v5.600 M978.9 514.500 h5.600 M981.700 511.7 v5.600"/></g>
<g fill="#f4f8fd" stroke="#5f7fb5" stroke-width=".9" stroke-linejoin="round"><path d="M582.300 511.300 h7.400 l-2.800 3.600 v3.700 l-1.800 -1 v-2.700z"/><path d="M960.800 508.800 h7.400 l-2.800 3.600 v3.700 l-1.800 -1 v-2.700z"/></g>
</svg>
<!--/MAIN-->
</body></html>
